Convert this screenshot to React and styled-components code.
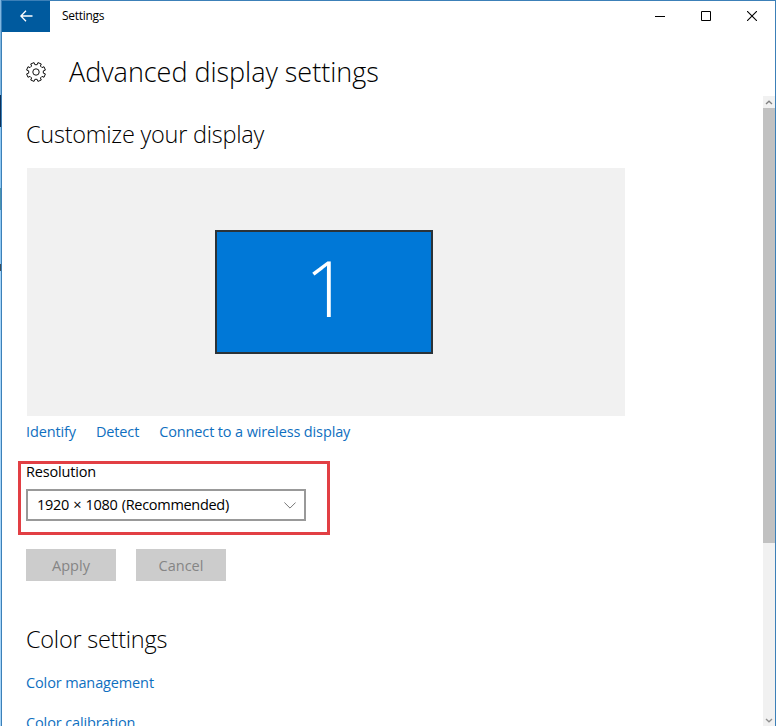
import React from "react";
import styled, { createGlobalStyle } from "styled-components";

const GlobalStyle = createGlobalStyle`
  * {
    box-sizing: border-box;
  }

  body {
    margin: 0;
    overflow: hidden;
    font-family: "Open Sans", "Noto Sans", sans-serif;
    color: #000;
  }
`;

const App = () => {
  return (
    <Desktop>
      <GlobalStyle />
      <DesktopEdge>
        <EdgeMark $height={95} $color="#7fb6e0" />
        <EdgeMark $height={32} $color="#0c3058" />
        <EdgeMark $height={61} $color="#8fc8f2" />
        <EdgeMark $height={22} $color="#4c93ae" />
        <EdgeMark $height={54} $color="#8fc8f2" />
        <EdgeMark $height={7} $color="#3c4c58" />
      </DesktopEdge>
      <Window>
        <TitleBar>
          <BackButton>
            <svg width="13" height="12" viewBox="0 0 13 12" fill="none" stroke="#fff" strokeWidth="1.3">
              <path d="M12.5 6H1.2M6 .8L.9 6L6 11.2" />
            </svg>
          </BackButton>
          <WindowTitle>Settings</WindowTitle>
          <WindowButton>
            <svg width="10" height="10" stroke="#000">
              <path d="M0 5.5H10" />
            </svg>
          </WindowButton>
          <WindowButton>
            <svg width="10" height="10" fill="none" stroke="#000">
              <path d="M.5 .5H9.5V9.5H.5Z" />
            </svg>
          </WindowButton>
          <WindowButton>
            <svg width="10" height="10" fill="none" stroke="#000" strokeWidth="1.1">
              <path d="M0 0L10 10M10 0L0 10" />
            </svg>
          </WindowButton>
        </TitleBar>

        <PageHeader>
          <GearIcon />
          <PageTitle>Advanced display settings</PageTitle>
        </PageHeader>

        <Body>
          <Content>
            <SectionHeading>Customize your display</SectionHeading>
            <DisplayArea>
              <Monitor>1</Monitor>
            </DisplayArea>
            <LinkRow>
              <Link>Identify</Link>
              <Link>Detect</Link>
              <Link>Connect to a wireless display</Link>
            </LinkRow>
            <Highlight>
              <Label>Resolution</Label>
              <Select>
                <SelectValue>1920 × 1080 (Recommended)</SelectValue>
                <svg width="12" height="7" viewBox="0 0 12 7" fill="none" stroke="#777">
                  <path d="M.4 .5L6 6.1L11.6 .5" />
                </svg>
              </Select>
            </Highlight>
            <ButtonRow>
              <Button>Apply</Button>
              <Button>Cancel</Button>
            </ButtonRow>
            <SectionHeading>Color settings</SectionHeading>
            <LinkList>
              <Link>Color management</Link>
              <Link>Color calibration</Link>
            </LinkList>
          </Content>
          <Scrollbar>
            <ScrollArrow>
              <svg width="8" height="5" viewBox="0 0 8 5" fill="none" stroke="#808080" strokeWidth="1.3">
                <path d="M1 4L4 1.2L7 4" />
              </svg>
            </ScrollArrow>
            <ScrollThumb />
            <ScrollArrow>
              <svg width="8" height="5" viewBox="0 0 8 5" fill="none" stroke="#909090" strokeWidth="1.3">
                <path d="M1 1L4 3.8L7 1" />
              </svg>
            </ScrollArrow>
          </Scrollbar>
        </Body>
      </Window>
    </Desktop>
  );
};

// outline of an eight toothed cog, built from polar points
const cogPath = () => {
  const points = [];
  for (let i = 0; i < 8; i++) {
    const middle = (i * Math.PI) / 4 + Math.PI / 8;
    [
      [-0.24, 7.4],
      [-0.19, 9.6],
      [0.19, 9.6],
      [0.24, 7.4],
    ].forEach(([angle, radius]) => {
      const x = 10 + radius * Math.cos(middle + angle);
      const y = 10 + radius * Math.sin(middle + angle);
      points.push(`${x.toFixed(2)} ${y.toFixed(2)}`);
    });
  }
  return `M${points.join("L")}Z`;
};

const GearIcon = () => (
  <svg width="20" height="20" viewBox="0 0 20 20" fill="none" stroke="#111" strokeLinejoin="round">
    <path d={cogPath()} />
    <circle cx="10" cy="10" r="3.2" />
  </svg>
);

const Desktop = styled.div`
  display: flex;
  width: 776px;
  height: 726px;
  overflow: hidden;
`;

const DesktopEdge = styled.div`
  width: 1px;
  background: #a5d4f8;
`;

const EdgeMark = styled.div`
  height: ${(props) => props.$height}px;
  background: ${(props) => props.$color};
`;

const Window = styled.div`
  flex: 1;
  display: flex;
  flex-direction: column;
  background: #fff;
  border: 1px solid #3c80b8;
  border-bottom: none;
`;

const TitleBar = styled.div`
  display: flex;
  height: 31px;
  padding-bottom: 1px;
  flex-shrink: 0;
`;

const BackButton = styled.div`
  width: 48px;
  height: 31px;
  padding-bottom: 1px;
  display: flex;
  align-items: center;
  justify-content: center;
  background: #005a9e;
`;

const WindowTitle = styled.div`
  flex: 1;
  padding-left: 12px;
  font-size: 12px;
  line-height: 30px;
  letter-spacing: -0.28px;
`;

const WindowButton = styled.div`
  width: 46px;
  display: flex;
  align-items: center;
  justify-content: center;
`;

const PageHeader = styled.div`
  display: flex;
  align-items: center;
  gap: 23px;
  height: 64px;
  padding: 16px 0 0 24px;
  flex-shrink: 0;
`;

const PageTitle = styled.h1`
  margin: 0;
  font-size: 27px;
  font-weight: 350;
  line-height: 36px;
  letter-spacing: -0.03px;
  white-space: nowrap;
`;

const Body = styled.div`
  display: flex;
  flex: 1;
  min-height: 0;
`;

const Content = styled.div`
  flex: 1;
  padding: 22px 0 0 24px;
  overflow: hidden;
`;

const SectionHeading = styled.h2`
  margin: 0;
  font-size: 23.5px;
  font-weight: 350;
  line-height: 33px;
  letter-spacing: -0.25px;
`;

const DisplayArea = styled.div`
  display: flex;
  align-items: center;
  justify-content: center;
  width: 598px;
  height: 248px;
  margin: 17px 0 0 1px;
  padding-right: 4px;
  background: #f1f1f1;
`;

const Monitor = styled.div`
  width: 218px;
  height: 124px;
  padding-left: 6px;
  border: 2px solid #2b3338;
  background: #0078d7;
  color: #fff;
  font-size: 78px;
  font-weight: 300;
  line-height: 110px;
  text-align: center;
`;

const LinkRow = styled.div`
  display: flex;
  gap: 20px;
  height: 45px;
  padding-top: 6px;
`;

const Link = styled.a`
  color: #0f6fc0;
  font-size: 14.5px;
  line-height: 20px;
  letter-spacing: -0.13px;
  white-space: nowrap;
`;

const Highlight = styled.div`
  width: 312px;
  height: 74px;
  margin-left: -8px;
  padding-left: 5px;
  border: 3px solid #e23f44;
`;

const Label = styled.div`
  font-size: 14.5px;
  line-height: 16px;
  letter-spacing: -0.18px;
`;

const Select = styled.div`
  display: flex;
  align-items: center;
  justify-content: space-between;
  width: 280px;
  height: 32px;
  margin-top: 9px;
  padding: 0 8px 0 9px;
  border: 2px solid #999;
`;

const SelectValue = styled.span`
  font-size: 14.5px;
  letter-spacing: -0.3px;
  word-spacing: 0.8px;
  line-height: 28px;
`;

const ButtonRow = styled.div`
  display: flex;
  gap: 20px;
  margin: 14px 0 42px;
`;

const Button = styled.div`
  width: 90px;
  height: 32px;
  background: #ccc;
  color: #858585;
  font-size: 14.5px;
  line-height: 33px;
  text-align: center;
`;

const LinkList = styled.div`
  display: flex;
  flex-direction: column;
  gap: 20px;
  margin-top: 17px;
`;

const Scrollbar = styled.div`
  display: flex;
  flex-direction: column;
  width: 12px;
  background: #f1f1f1;
`;

const ScrollArrow = styled.div`
  display: flex;
  align-items: center;
  justify-content: center;
  height: 12px;
`;

const ScrollThumb = styled.div`
  height: 435px;
  margin-bottom: auto;
  background: #c1c1c1;
`;

export default App;
